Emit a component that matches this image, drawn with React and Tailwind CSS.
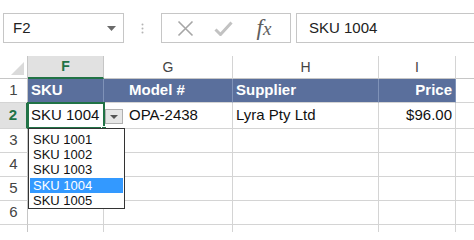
import React from "react";

const F = { fontFamily: '"Liberation Sans", Arial, sans-serif' };

function HeadCell({ w, children, selected }) {
  return (
    <div
      className={`h-full flex items-center justify-center text-[14px] shrink-0 border-r ${
        selected
          ? "bg-[#e1e1e1] text-[#217346] font-bold border-b-2 border-b-[#217346] border-r-[#c6c6c6]"
          : "bg-white text-[#444] border-b border-b-[#c6c6c6] border-r-[#d4d4d4]"
      }`}
      style={{ width: w }}
    >
      {children}
    </div>
  );
}

const widths = [76, 129, 146, 77, 30];

function Row({ h, num, active, cells, header }) {
  return (
    <div className="flex shrink-0" style={{ height: h }}>
      <div
        className={`w-[28px] shrink-0 flex items-center justify-center text-[15px] border-b border-b-[#d4d4d4] ${
          active
            ? "bg-[#e1e1e1] text-[#217346] font-bold border-r-2 border-r-[#217346]"
            : "bg-white text-[#444] border-r border-r-[#c6c6c6]"
        }`}
      >
        {num}
      </div>
      {widths.map((w, i) => {
        const c = cells ? cells[i] : null;
        const blue = header && i < 4;
        return (
          <div
            key={i}
            className={`shrink-0 flex items-center text-[15px] border-r border-b ${
              i === 1 ? "pl-[25px] pr-[3px]" : "px-[3px]"
            } ${
              blue
                ? "bg-[#5a6f9c] text-white font-bold border-r-[#7f92b8] border-b-[#d4d4d4]"
                : "bg-white text-[#111] border-r-[#d4d4d4] border-b-[#d4d4d4]"
            } ${c && c.right ? "justify-end" : ""}`}
            style={{ width: w }}
          >
            {c ? c.t : null}
          </div>
        );
      })}
    </div>
  );
}

export default function App() {
  return (
    <div className="w-[474px] h-[232px] bg-white overflow-hidden relative" style={F}>
      {/* formula bar */}
      <div className="h-[56px] pt-[13px] flex items-start bg-white">
        <div className="ml-[3px] w-[121px] h-[30px] border border-[#c6c6c6] flex items-center justify-between pl-[9px] pr-[7px] text-[15px] text-[#222]">
          <span>F2</span>
          <svg width="9" height="5" viewBox="0 0 9 5"><path d="M0 0h9L4.5 5z" fill="#6a6a6a" /></svg>
        </div>
        <div className="w-[37px] h-[30px] flex items-center justify-center">
          <svg width="3" height="11" viewBox="0 0 3 11">
            <circle cx="1.5" cy="1.5" r="1" fill="#b4b4b4" />
            <circle cx="1.5" cy="5.5" r="1" fill="#b4b4b4" />
            <circle cx="1.5" cy="9.5" r="1" fill="#b4b4b4" />
          </svg>
        </div>
        <div className="w-[130px] h-[30px] border border-[#c6c6c6] flex items-center">
          <div className="w-[46px] flex justify-center">
            <svg width="17" height="17" viewBox="0 0 17 17">
              <path d="M1.5 1.5l14 14M15.5 1.5l-14 14" stroke="#a6a6a6" strokeWidth="1.6" />
            </svg>
          </div>
          <div className="w-[30px] flex justify-center">
            <svg width="19" height="15" viewBox="0 0 19 15">
              <path d="M1.5 8.5l5 5L17.5 1.5" stroke="#c2c2c2" strokeWidth="3" fill="none" />
            </svg>
          </div>
          <div
            className="flex-1 flex justify-center text-[23px] italic text-[#5e5e5e] leading-none pb-[2px]"
            style={{ fontFamily: '"Liberation Serif", "Times New Roman", serif' }}
          >
            <span>f</span><span className="text-[19px] mt-[3px]">x</span>
          </div>
        </div>
        <div className="ml-[5px] flex-1 h-[30px] border border-r-0 border-[#c6c6c6] flex items-center pl-[12px] text-[15px] text-[#222]">
          SKU 1004
        </div>
      </div>

      {/* grid */}
      <div className="relative flex flex-col">
        <div className="flex h-[23px] shrink-0">
          <div className="w-[28px] h-full shrink-0 bg-white border-r border-b border-[#c6c6c6] flex items-end justify-end p-[3px]">
            <svg width="13" height="13" viewBox="0 0 13 13"><path d="M13 0v13H0z" fill="#dadada" /></svg>
          </div>
          <HeadCell w={76} selected>F</HeadCell>
          <HeadCell w={129}>G</HeadCell>
          <HeadCell w={146}>H</HeadCell>
          <HeadCell w={77}>I</HeadCell>
          <HeadCell w={30}></HeadCell>
        </div>
        <Row
          h={24}
          num="1"
          header
          cells={[{ t: "SKU" }, { t: "Model #" }, { t: "Supplier" }, { t: "Price", right: true }]}
        />
        <Row
          h={26}
          num="2"
          active
          cells={[{ t: "SKU 1004" }, { t: "OPA-2438" }, { t: "Lyra Pty Ltd" }, { t: "$96.00", right: true }]}
        />
        <Row h={24} num="3" />
        <Row h={24} num="4" />
        <Row h={24} num="5" />
        <Row h={24} num="6" />
        <Row h={24} num="" />

        {/* active cell border */}
        <div className="absolute left-[27px] top-[46px] w-[78px] h-[27px] border-2 border-[#217346] pointer-events-none" />
        <div className="absolute left-[101px] top-[70px] w-[6px] h-[6px] bg-[#217346] border border-white" />

        {/* cell dropdown button */}
        <div className="absolute left-[105px] top-[53px] w-[18px] h-[15px] bg-[#e6e6e6] border border-[#b0b0b0] flex items-center justify-center">
          <svg width="8" height="4" viewBox="0 0 8 4"><path d="M0 0h8L4 4z" fill="#555" /></svg>
        </div>

        {/* dropdown list */}
        <div className="absolute left-[28px] top-[72px] w-[97px] h-[81px] bg-white border border-[#333] pt-[3px] flex flex-col">
          {["SKU 1001", "SKU 1002", "SKU 1003", "SKU 1004", "SKU 1005"].map((s) => (
            <div
              key={s}
              className={`h-[15.5px] leading-[15px] pl-[3px] mx-[1px] text-[13px] ${
                s === "SKU 1004" ? "bg-[#3399ff] text-white" : "text-[#111]"
              }`}
            >
              {s}
            </div>
          ))}
        </div>
      </div>
    </div>
  );
}
